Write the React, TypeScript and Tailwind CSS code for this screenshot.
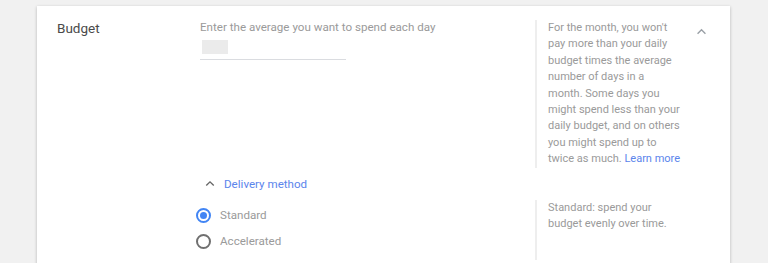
import React from "react";

function ChevronUp({ className }: { className?: string }) {
  return (
    <svg viewBox="0 0 12 8" className={className} fill="none">
      <path d="M1.5 6.5 L6 2 L10.5 6.5" stroke="currentColor" strokeWidth="1.6" />
    </svg>
  );
}

const helpLines = [
  "For the month, you won't",
  "pay more than your daily",
  "budget times the average",
  "number of days in a",
  "month. Some days you",
  "might spend less than your",
  "daily budget, and on others",
  "you might spend up to",
];

export default function App() {
  return (
    <div
      className="w-[768px] h-[263px] overflow-hidden bg-[#f1f1f1]"
      style={{ fontFamily: "Roboto, 'Liberation Sans', sans-serif" }}
    >
      <div className="ml-[37px] mt-[6px] w-[693px] h-[300px] bg-white shadow-[0_1px_3px_rgba(0,0,0,0.25)]">
        {/* Budget row */}
        <div className="flex">
          <div className="w-[163px] pl-[20px] pt-[13px] text-[13.5px] leading-[18px] text-[#4a4a4a]">
            Budget
          </div>
          <div className="w-[335px] pt-[13px]">
            <div className="text-[11.6px] leading-[16px] text-[#9a9a9a]">
              Enter the average you want to spend each day
            </div>
            <div className="mt-[5px] w-[146px] border-b border-[#dadce0] pb-[5px]">
              <div className="ml-[2px] h-[14px] w-[26px] bg-[#ebebeb]" />
            </div>
          </div>
          <div className="mt-[14px] flex">
            <div className="w-[149px] whitespace-nowrap border-l-2 border-[#eeeeee] pl-[11px] text-[11px] leading-[16.4px] text-[#9a9a9a]">
              {helpLines.map((l) => (
                <div key={l}>{l}</div>
              ))}
              <div>
                twice as much. <span className="text-[#5b85ec]">Learn more</span>
              </div>
            </div>
            <ChevronUp className="ml-[12px] mt-[8px] h-[7px] w-[11px] text-[#9aa0a6]" />
          </div>
        </div>
        {/* Delivery method */}
        <div className="flex pt-[8px]">
          <div className="w-[163px]" />
          <div className="flex items-center gap-[9px] pl-[5px] text-[11.6px] leading-[16px] text-[#5b85ec]">
            <ChevronUp className="h-[7px] w-[10px] text-[#666666]" />
            <span>Delivery method</span>
          </div>
        </div>
        {/* Radios */}
        <div className="flex pt-[8px]">
          <div className="w-[163px]" />
          <div className="w-[335px] pt-[8px] flex flex-col gap-[11px]">
            <div className="flex items-center gap-[9px] text-[11.6px] leading-[15px] text-[#9a9a9a]">
              <span className="ml-[-4px] flex h-[15px] w-[15px] items-center justify-center rounded-full border-2 border-[#4285f4]">
                <span className="h-[7px] w-[7px] rounded-full bg-[#4285f4]" />
              </span>
              <span>Standard</span>
            </div>
            <div className="flex items-center gap-[9px] text-[11.6px] leading-[15px] text-[#9a9a9a]">
              <span className="ml-[-4px] h-[15px] w-[15px] rounded-full border-2 border-[#707070]" />
              <span>Accelerated</span>
            </div>
          </div>
          <div className="h-[60px] w-[149px] border-l-2 border-[#eeeeee] pl-[11px] text-[11px] leading-[16.4px] text-[#9a9a9a]">
            <div>Standard: spend your</div>
            <div>budget evenly over time.</div>
          </div>
        </div>
      </div>
    </div>
  );
}
